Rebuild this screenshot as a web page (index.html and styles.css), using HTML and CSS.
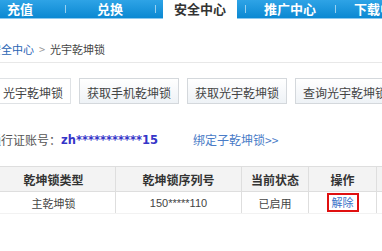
FILE: index.html
```html
<!DOCTYPE html>
<html lang="zh-CN">
<head>
<meta charset="utf-8">
<title>光宇乾坤锁</title>
<link rel="stylesheet" href="styles.css">
</head>
<body>
<nav class="topnav">
  <a class="nav-item"><span class="nav-label">充值</span></a>
  <a class="nav-item"><span class="nav-label">兑换</span></a>
  <a class="nav-item active"><span class="nav-label">安全中心</span></a>
  <a class="nav-item"><span class="nav-label">推广中心</span></a>
  <a class="nav-item"><span class="nav-label">下载中心</span></a>
</nav>
<div class="crumbs">
  <a class="crumb-link">安全中心</a><span class="crumb-sep">&gt;</span><span class="crumb-cur">光宇乾坤锁</span>
</div>
<div class="tabs">
  <a class="tab active">光宇乾坤锁</a>
  <a class="tab">获取手机乾坤锁</a>
  <a class="tab">获取光宇乾坤锁</a>
  <a class="tab">查询光宇乾坤锁</a>
</div>
<div class="account">
  <span class="acc-label">通行证账号：</span><span class="acc-value">zh***********15</span><a class="bind-link">绑定子乾坤锁&gt;&gt;</a>
</div>
<table class="lock-table">
  <colgroup>
    <col class="c1"><col class="c2"><col class="c3"><col class="c4"><col class="c5">
  </colgroup>
  <thead>
    <tr><th>乾坤锁类型</th><th>乾坤锁序列号</th><th>当前状态</th><th>操作</th><th></th></tr>
  </thead>
  <tbody>
    <tr><td>主乾坤锁</td><td class="num">150*****110</td><td>已启用</td><td><a class="unbind">解除</a></td><td></td></tr>
  </tbody>
</table>
</body>
</html>
```
FILE: styles.css
```css
html, body {
  margin: 0;
  padding: 0;
  background: #fff;
}
body {
  width: 382px;
  height: 251px;
  overflow: hidden;
  font-family: "Noto Sans CJK SC", "Noto Sans", sans-serif;
  font-size: 12px;
  color: #333;
}
a { text-decoration: none; }

.topnav {
  display: flex;
  height: 18px;
  margin-left: -25px;
  width: 460px;
  background: linear-gradient(#2ea3e6, #0b88d2);
  border-bottom: 1px solid #8cc8ee;
}
.nav-item {
  position: relative;
  flex: 0 0 90px;
  display: flex;
}
.nav-item + .nav-item::before {
  content: "";
  position: absolute;
  left: 0;
  top: 5px;
  height: 8px;
  width: 1px;
  background: rgba(255,255,255,0.55);
}
.nav-label {
  flex: 1;
  margin: 0 8px;
  text-align: center;
  line-height: 17px;
  font-size: 13px;
  font-weight: bold;
  color: #fff;
}
.nav-item.active .nav-label {
  background: #fff;
  color: #333;
  height: 19px;
}

.crumbs {
  margin-left: -10px;
  padding-top: 22px;
  padding-bottom: 5px;
  line-height: 16px;
  font-size: 11px;
  border-bottom: 1px solid #e8e8e8;
  width: 420px;
}
.crumb-link { color: #2a64b4; }
.crumb-sep { color: #999; margin: 0 5px; }
.crumb-cur { color: #444; }

.tabs {
  display: flex;
  gap: 8px;
  margin-top: 15px;
  margin-left: -5px;
  width: 500px;
}
.tab {
  flex: 0 0 auto;
  padding: 3px 7px 0;
  line-height: 21px;
  border: 1px solid #d4d8dc;
  background: linear-gradient(#ffffff, #eef2f6);
  color: #444;
  font-size: 12px;
}
.tab.active {
  background: #fff;
  border-color: #dfe2e5;
}

.account {
  margin-top: 28px;
  margin-left: -11px;
  line-height: 16px;
  display: flex;
  align-items: center;
}
.acc-label { color: #555; }
.acc-value {
  font-family: "DejaVu Sans", sans-serif;
  font-weight: bold;
  font-size: 11.5px;
  color: #3535c8;
}
.bind-link {
  margin-left: 35px;
  color: #4a7cc7;
}

.lock-table {
  margin-top: 18px;
  margin-left: -9px;
  border-collapse: collapse;
  table-layout: fixed;
  width: 420px;
}
.c1 { width: 124px; }
.c2 { width: 126px; }
.c3 { width: 67px; }
.c4 { width: 68px; }
.c5 { width: 35px; }
.lock-table th,
.lock-table td {
  border: 1px solid #dedede;
  text-align: center;
  padding: 0;
}
.lock-table th {
  height: 24px;
  background: #f3f3f3;
  font-weight: bold;
  font-size: 12px;
  color: #333;
}
.lock-table td {
  height: 21px;
  font-size: 11px;
  color: #444;
  border-bottom-color: #f2f2f2;
}
.lock-table td.num {
  font-family: "Liberation Sans", sans-serif;
  font-size: 11px;
}
.unbind {
  display: inline-block;
  padding: 0 3px;
  line-height: 15px;
  border: 2px solid #e01010;
  color: #3a72c8;
  font-size: 11px;
}
```
